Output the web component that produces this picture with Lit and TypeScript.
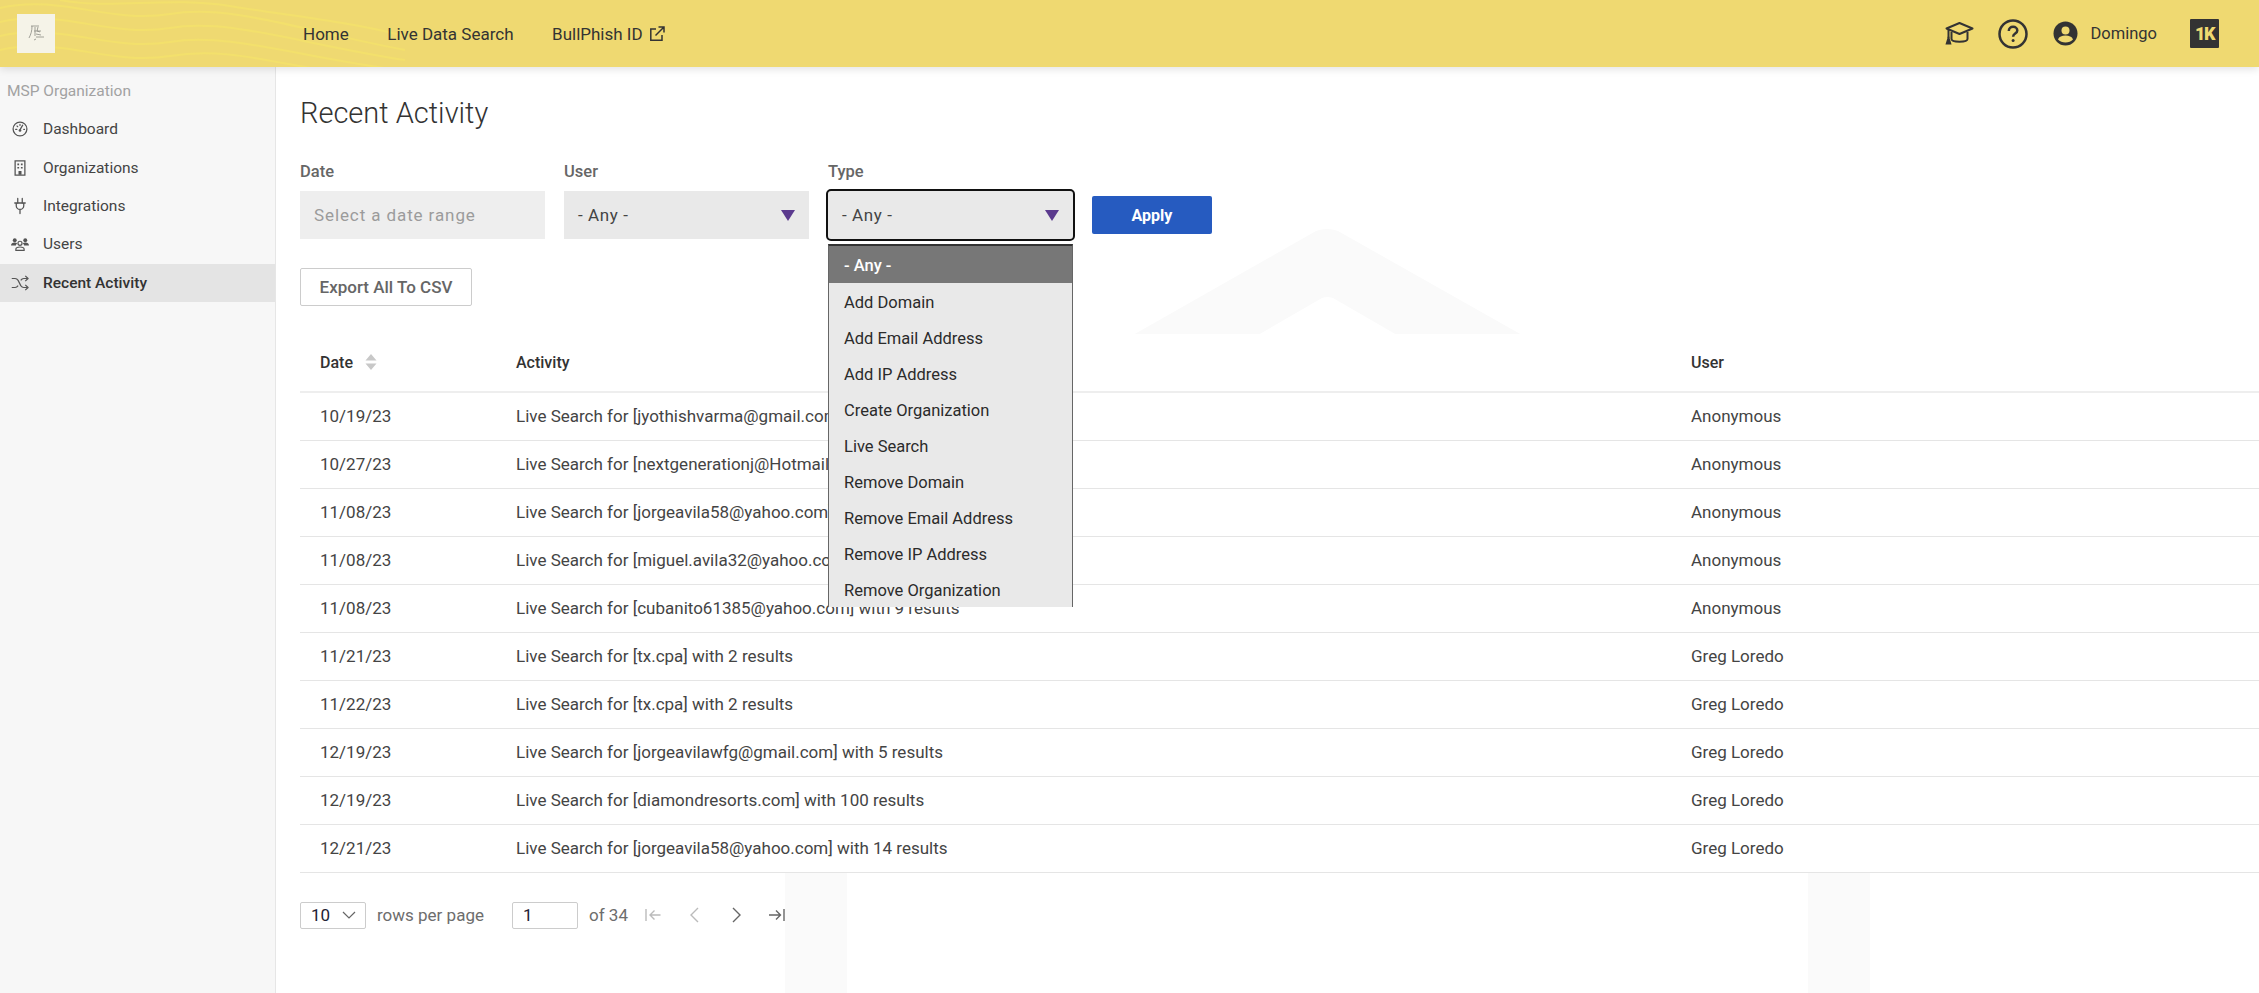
import { LitElement, html, css, svg } from "lit";
import { customElement } from "lit/decorators.js";

const NAV_ICONS = {
  dashboard: svg`<circle cx="12" cy="12" r="9.200" fill="none" stroke="currentColor" stroke-width="1.700"/><path d="M12 13l3.500-6" fill="none" stroke="currentColor" stroke-width="1.900" stroke-linecap="round"/><circle cx="12" cy="14" r="1.800" fill="currentColor"/><path d="M6.200 12.500h1.600M8 8l1 1M12 5.600v1.600M17 12.500h1" stroke="currentColor" stroke-width="1.500" stroke-linecap="round"/>`,
  org: svg`<path d="M5.500 2.500h13v19h-13z" fill="none" stroke="currentColor" stroke-width="1.700"/><path d="M8.500 6h2.300v2.300H8.500zM13.200 6h2.300v2.300h-2.300zM8.500 10.500h2.300v2.300H8.500zM13.200 10.500h2.300v2.300h-2.300zM10 16h4v5h-4z" fill="currentColor"/>`,
  plug: svg`<path d="M9 2v6M15 2v6" stroke="currentColor" stroke-width="1.700" stroke-linecap="round"/><path d="M5 8h14M7 8v3.500a5 5 0 0 0 10 0V8M12 16.500V22" fill="none" stroke="currentColor" stroke-width="1.700" stroke-linecap="round"/>`,
  users: svg`<circle cx="5" cy="7" r="2.600" fill="currentColor"/><circle cx="19" cy="7" r="2.600" fill="currentColor"/><path d="M0 14c0-2.600 2-4 5-4 1.500 0 2.500.3 3.300 1-1 .8-1.600 1.800-1.800 3zM24 14c0-2.600-2-4-5-4-1.500 0-2.500.3-3.300 1 1 .8 1.600 1.800 1.800 3z" fill="currentColor"/><circle cx="12" cy="11" r="2.700" fill="none" stroke="currentColor" stroke-width="1.600"/><path d="M6.500 20.500v-1.500c0-2 2.200-3 5.500-3s5.500 1 5.500 3v1.500z" fill="none" stroke="currentColor" stroke-width="1.600"/>`,
  shuffle: svg`<path d="M1 6h4.500c2 0 3 1 4 2.500l3.500 7c1 1.500 2 2.500 4 2.500H22M1 18h4.500c2 0 3-1 4-2.500M13 8.500c1-1.500 2-2.500 4-2.500h5" fill="none" stroke="currentColor" stroke-width="1.600"/><path d="M19 2.500L22.800 6 19 9.500M19 14.500l3.800 3.500-3.800 3.500" fill="none" stroke="currentColor" stroke-width="1.600" stroke-linejoin="round"/>`,
};

const SIDE_ITEMS = [
  { label: "Dashboard", icon: "dashboard" },
  { label: "Organizations", icon: "org" },
  { label: "Integrations", icon: "plug" },
  { label: "Users", icon: "users" },
  { label: "Recent Activity", icon: "shuffle", active: true },
];

const TYPES = [
  "- Any -",
  "Add Domain",
  "Add Email Address",
  "Add IP Address",
  "Create Organization",
  "Live Search",
  "Remove Domain",
  "Remove Email Address",
  "Remove IP Address",
  "Remove Organization",
];

const ROWS = [
  ["10/19/23", "Live Search for [jyothishvarma@gmail.com] with 3 results", "Anonymous"],
  ["10/27/23", "Live Search for [nextgenerationj@Hotmail.com] with 4 results", "Anonymous"],
  ["11/08/23", "Live Search for [jorgeavila58@yahoo.com] with 14 results", "Anonymous"],
  ["11/08/23", "Live Search for [miguel.avila32@yahoo.com] with 2 results", "Anonymous"],
  ["11/08/23", "Live Search for [cubanito61385@yahoo.com] with 9 results", "Anonymous"],
  ["11/21/23", "Live Search for [tx.cpa] with 2 results", "Greg Loredo"],
  ["11/22/23", "Live Search for [tx.cpa] with 2 results", "Greg Loredo"],
  ["12/19/23", "Live Search for [jorgeavilawfg@gmail.com] with 5 results", "Greg Loredo"],
  ["12/19/23", "Live Search for [diamondresorts.com] with 100 results", "Greg Loredo"],
  ["12/21/23", "Live Search for [jorgeavila58@yahoo.com] with 14 results", "Greg Loredo"],
];

@customElement("app-root")
export class AppRoot extends LitElement {
  static styles = css`
    :host {
      display: flex;
      flex-direction: column;
      height: 993px;
      overflow: hidden;
      font-family: Roboto, "Liberation Sans", sans-serif;
      font-size: 17px;
      color: #3a3a3a;
      background: #fff;
    }

    .topbar {
      position: relative;
      z-index: 2;
      flex: none;
      height: 67px;
      display: flex;
      align-items: center;
      background: #efd971;
      box-shadow: 0 2px 8px rgba(0, 0, 0, 0.12);
      color: #333;
    }
    .waves {
      position: absolute;
      left: 0;
      top: 0;
      width: 410px;
      height: 67px;
    }
    .logo {
      position: relative;
      flex: none;
      width: 38px;
      height: 39px;
      margin-left: 17px;
      background: #f5f3e8;
      display: flex;
      align-items: center;
      justify-content: center;
    }
    .toplinks {
      position: relative;
      display: flex;
      gap: 38.500px;
      margin-left: 248px;
    }
    .toplinks a {
      display: flex;
      align-items: center;
      gap: 6px;
    }
    .topright {
      margin-left: auto;
      display: flex;
      align-items: center;
      margin-right: 40px;
    }
    .domingo {
      font-size: 16.500px;
      margin-left: 12px;
      margin-right: 33px;
    }
    .onek {
      width: 29px;
      height: 29px;
      background: #333;
      border-radius: 1px;
      color: #efd971;
      font-weight: 900;
      font-size: 18px;
      letter-spacing: -1.500px;
      display: flex;
      align-items: center;
      justify-content: center;
    }

    .body {
      flex: 1;
      display: flex;
      min-height: 0;
    }
    .sidebar {
      flex: none;
      box-sizing: border-box;
      width: 276px;
      background: #f7f7f7;
      border-right: 1px solid #e6e6e6;
      font-size: 15.500px;
    }
    .orgname {
      padding: 14px 0 9px 7px;
      line-height: 20px;
      color: #a2a2a2;
    }
    .sideitem {
      height: 38.400px;
      display: flex;
      align-items: center;
      padding-left: 11px;
      color: #444;
    }
    .sideitem svg {
      flex: none;
      width: 18px;
      height: 18px;
      color: #555;
      margin-right: 14px;
    }
    .sideitem.active {
      background: #e4e4e4;
      font-weight: 500;
      color: #333;
    }

    main {
      position: relative;
      flex: 1;
      min-width: 0;
      padding-left: 24px;
    }
    .watermark {
      position: absolute;
      left: 0;
      top: 0;
      width: 100%;
      height: 100%;
    }
    h1 {
      position: relative;
      margin: 26px 0 0;
      font-size: 29px;
      line-height: 40px;
      font-weight: 300;
      color: #333;
    }
    .filters {
      position: relative;
      z-index: 1;
      display: flex;
      align-items: flex-end;
      gap: 19px;
      margin-top: 29px;
    }
    .field {
      position: relative;
    }
    .field label {
      display: block;
      font-size: 16.500px;
      font-weight: 500;
      color: #666;
      line-height: 20px;
      margin-bottom: 9px;
    }
    .control {
      position: relative;
      box-sizing: border-box;
      width: 245px;
      height: 48px;
      padding: 0 14px;
      display: flex;
      align-items: center;
      background: #e9e9e9;
      letter-spacing: 0.600px;
      color: #444;
    }
    .control.date {
      background: #eeeeee;
      color: #9b9b9b;
      letter-spacing: 0.900px;
    }
    .control.focus {
      outline: 2px solid #111;
      border-radius: 3px;
    }
    .arrow {
      margin-left: auto;
      width: 0;
      height: 0;
      border-left: 7px solid transparent;
      border-right: 7px solid transparent;
      border-top: 11px solid #5b3a8e;
    }
    .menu {
      position: absolute;
      z-index: 3;
      left: 0;
      top: 53px;
      box-sizing: border-box;
      width: 245px;
      height: 363px;
      overflow: hidden;
      background: #e9e9e9;
      border: 1px solid #666;
      border-top: 2px solid #333;
      border-bottom: 0;
      letter-spacing: 0;
    }
    .menu div {
      height: 36px;
      line-height: 40px;
      padding-left: 15px;
      font-size: 16.500px;
      color: #2b2b2b;
    }
    .menu div:first-child {
      height: 37px;
      background: #777;
      color: #fff;
      font-weight: 500;
    }
    .apply {
      width: 120px;
      height: 38px;
      margin-bottom: 5px;
      background: #265bc0;
      border-radius: 2px;
      color: #fff;
      font-size: 16px;
      font-weight: 700;
      display: flex;
      align-items: center;
      justify-content: center;
    }
    .export {
      position: relative;
      box-sizing: border-box;
      width: 172px;
      height: 38px;
      margin-top: 29px;
      border: 1px solid #ccc;
      border-radius: 2px;
      background: #fff;
      font-weight: 500;
      color: #666;
      display: flex;
      align-items: center;
      justify-content: center;
    }

    table {
      position: relative;
      width: 100%;
      margin-top: 28px;
      border-collapse: collapse;
      table-layout: fixed;
      background: #fff;
    }
    th {
      height: 57px;
      padding: 0 0 0 20px;
      text-align: left;
      font-size: 16px;
      font-weight: 500;
      color: #333;
      border-bottom: 2px solid #eee;
    }
    td {
      box-sizing: border-box;
      height: 48px;
      padding: 0 0 1px 20px;
      color: #444;
      border-bottom: 1px solid #e5e5e5;
    }
    .sort {
      display: inline-block;
      vertical-align: -2px;
      margin-left: 12px;
    }

    .pager {
      position: relative;
      display: flex;
      align-items: center;
      height: 27px;
      margin-top: 29px;
      color: #6d6d6d;
    }
    .box {
      box-sizing: border-box;
      height: 27px;
      width: 66px;
      padding-left: 10px;
      border: 1px solid #ccc;
      border-radius: 2px;
      display: flex;
      align-items: center;
      color: #223;
    }
    .box svg {
      margin-left: 12px;
    }
    .rows {
      width: 106px;
      margin: 0 29px 0 11px;
      white-space: nowrap;
    }
    .ofn {
      width: 38px;
      margin-left: 11px;
      margin-right: 18px;
      white-space: nowrap;
    }
    .pager .pg {
      flex: none;
      display: block;
    }
    .strip {
      position: absolute;
      top: 806px;
      bottom: 0;
      width: 62px;
      background: #fafafa;
    }
    .strip.left {
      left: 509px;
    }
    .strip.right {
      left: 1532px;
    }
  `;

  private navIcon(name: keyof typeof NAV_ICONS) {
    return html`<svg viewBox="0 0 24 24">${NAV_ICONS[name]}</svg>`;
  }

  render() {
    return html`
      <header class="topbar">
        <svg class="waves" viewBox="0 0 410 67" preserveAspectRatio="none" fill="none" stroke="#f3e06c" stroke-width="2">
          <path d="M0 8C60 -6 110 24 170 14S300 30 405 50" />
          <path d="M0 22C60 8 110 38 170 28S300 44 405 60" />
          <path d="M0 36C60 22 110 52 170 42S300 58 400 70" />
          <path d="M0 50C60 36 110 66 170 56S280 66 340 72" />
          <path d="M60 0C110 10 170 -4 230 6S340 20 405 36" />
        </svg>
        <div class="logo">
          <svg width="20" height="20" viewBox="0 0 20 20" fill="none" stroke="#8a8a84" stroke-width="0.800">
            <path d="M5 2h8M6 2c0 5-1 8-3 12M9 3v9M12 3l-1 4 3 1M8 7h7M10 10l5 1M10 13h8M8 16l2-1" />
          </svg>
        </div>
        <nav class="toplinks">
          <a>Home</a>
          <a>Live Data Search</a>
          <a>
            BullPhish ID
            <svg width="16" height="16" viewBox="0 0 16 16" fill="none" stroke="#333" stroke-width="1.500">
              <path d="M7 3H1.800v11.200H13V9M6.500 9.500L14.500 1.500M9.500 1h5.500v5.500" />
            </svg>
          </a>
        </nav>
        <div class="topright">
          <svg width="29" height="26" viewBox="0 0 29 26" fill="none" stroke="#333" stroke-width="2" style="margin-right:24px">
            <path d="M14.500 2L27.500 7.500 14.500 13 1.500 7.500z" stroke-linejoin="round" />
            <path d="M6.500 11v7c0 3.500 16 3.500 16 0v-7M3.500 9v8" />
            <path d="M1.800 22.500l1.700-5.500 1.700 5.500z" fill="#333" />
          </svg>
          <svg width="30" height="30" viewBox="0 0 30 30" fill="none" stroke="#333" stroke-width="2.500" style="margin-right:25px">
            <circle cx="15" cy="15" r="13.500" />
            <path d="M10.800 12c0-2.700 1.900-4.200 4.300-4.200s4.200 1.500 4.200 3.700c0 3.200-4.200 3-4.200 6.200" />
            <circle cx="15.100" cy="21.500" r="1.500" fill="#333" stroke="none" />
          </svg>
          <svg width="25" height="25" viewBox="0 0 25 25">
            <circle cx="12.500" cy="12.500" r="12" fill="#333" />
            <circle cx="12.500" cy="9.500" r="4" fill="#efd971" />
            <path d="M5 18.500c1-3 4-4 7.500-4s6.500 1 7.500 4c-1.800 2-4.500 3-7.500 3s-5.700-1-7.500-3z" fill="#efd971" />
          </svg>
          <span class="domingo">Domingo</span>
          <div class="onek">1K</div>
        </div>
      </header>
      <div class="body">
        <aside class="sidebar">
          <div class="orgname">MSP Organization</div>
          ${SIDE_ITEMS.map(
            (it) => html`<div class="sideitem ${it.active ? "active" : ""}">
              ${this.navIcon(it.icon as keyof typeof NAV_ICONS)}${it.label}
            </div>`
          )}
        </aside>
        <main>
          <svg class="watermark">
            <path
              d="M857 268L1040 164Q1051 160 1062 164L1246 268H1121L1057 231Q1051 229 1046 231L982 268z"
              fill="#fafafa"
            />
          </svg>
          <div class="strip left"></div>
          <div class="strip right"></div>
          <h1>Recent Activity</h1>
          <div class="filters">
            <div class="field">
              <label>Date</label>
              <div class="control date">Select a date range</div>
            </div>
            <div class="field">
              <label>User</label>
              <div class="control">- Any -<span class="arrow"></span></div>
            </div>
            <div class="field">
              <label>Type</label>
              <div class="control focus">
                - Any -<span class="arrow"></span>
                <div class="menu">${TYPES.map((t) => html`<div>${t}</div>`)}</div>
              </div>
            </div>
            <div class="apply">Apply</div>
          </div>
          <div class="export">Export All To CSV</div>
          <table>
            <colgroup>
              <col style="width:196px" />
              <col style="width:1175px" />
              <col />
            </colgroup>
            <thead>
              <tr>
                <th>
                  Date<svg class="sort" width="12" height="16" viewBox="0 0 12 16" fill="#c8c8c8">
                    <path d="M6 0l5.500 6.500H.5zM6 16l5.500-6.500H.5z" />
                  </svg>
                </th>
                <th>Activity</th>
                <th>User</th>
              </tr>
            </thead>
            <tbody>
              ${ROWS.map((r) => html`<tr><td>${r[0]}</td><td>${r[1]}</td><td>${r[2]}</td></tr>`)}
            </tbody>
          </table>
          <div class="pager">
            <div class="box">
              10
              <svg width="14" height="8" viewBox="0 0 14 8" fill="none" stroke="#666" stroke-width="1.200">
                <path d="M1 1l6 6 6-6" />
              </svg>
            </div>
            <span class="rows">rows per page</span>
            <div class="box">1</div>
            <span class="ofn">of 34</span>
            <svg class="pg" width="17" height="14" viewBox="0 0 17 14" fill="none" stroke="#bbb" stroke-width="1.400" style="margin-right:27px">
              <path d="M1 1v12M15.500 7H5M9.500 2.500L5 7l4.500 4.500" />
            </svg>
            <svg class="pg" width="10" height="16" viewBox="0 0 10 16" fill="none" stroke="#bbb" stroke-width="1.400" style="margin-right:33px">
              <path d="M9 1L2 8l7 7" />
            </svg>
            <svg class="pg" width="10" height="16" viewBox="0 0 10 16" fill="none" stroke="#666" stroke-width="1.400" style="margin-right:27px">
              <path d="M1 1l7 7-7 7" />
            </svg>
            <svg class="pg" width="16" height="14" viewBox="0 0 16 14" fill="none" stroke="#666" stroke-width="1.400">
              <path d="M0 7h11M7 2.500L11.500 7 7 11.500M15 1v12" />
            </svg>
          </div>
        </main>
      </div>
    `;
  }
}
